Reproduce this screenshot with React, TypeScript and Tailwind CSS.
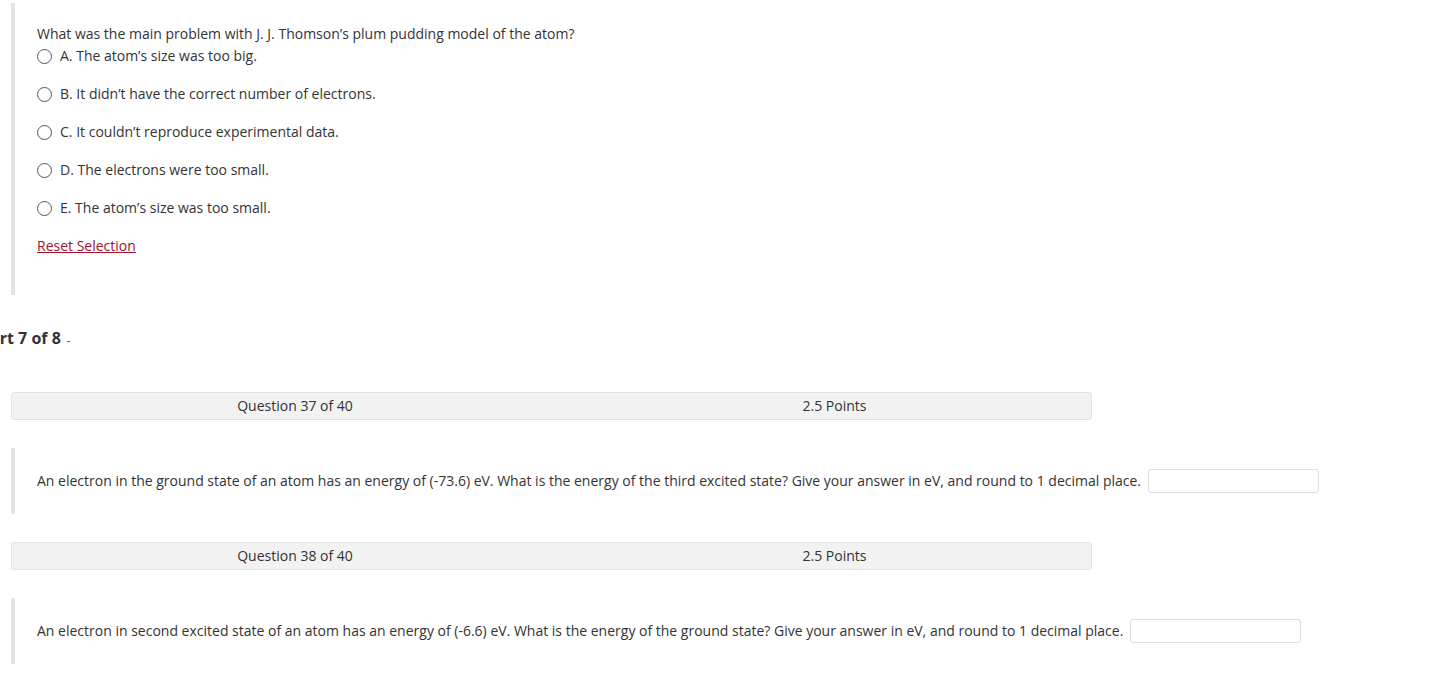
const OPTIONS = [
  "A. The atom’s size was too big.",
  "B. It didn’t have the correct number of electrons.",
  "C. It couldn’t reproduce experimental data.",
  "D. The electrons were too small.",
  "E. The atom’s size was too small.",
];

function Radio({ label }: { label: string }) {
  return (
    <label className="flex h-[18px] items-center gap-[8px]">
      <span className="h-[15px] w-[15px] shrink-0 rounded-full border border-[#555] bg-white" />
      <span>{label}</span>
    </label>
  );
}

function QuestionHeader({ num }: { num: number }) {
  return (
    <div className="ml-[11px] grid h-[28px] w-[1081px] grid-cols-[566px_1fr] items-center rounded-[3px] border border-[#e2e2e2] bg-[#f2f2f2]">
      <div className="text-center">Question {num} of 40</div>
      <div className="text-center">2.5 Points</div>
    </div>
  );
}

function FillIn({ text }: { text: string }) {
  return (
    <div className="ml-[11px] flex h-[66px] items-center border-l-4 border-[#e3e3e3] pl-[22px]">
      <span>{text}</span>
      <input
        type="text"
        className="ml-[7px] h-[24px] w-[171px] rounded-[3px] border border-[#dedede] bg-white outline-none"
      />
    </div>
  );
}

export default function App() {
  return (
    <div
      className="min-h-[682px] overflow-hidden bg-white text-[14px] leading-[18px] text-[#333]"
      style={{ fontFamily: '"Open Sans", Arial, sans-serif' }}
    >
      <div className="ml-[11px] mt-[3px] h-[292px] border-l-4 border-[#e3e3e3] pl-[22px] pt-[22px]">
        <p>What was the main problem with J. J. Thomson’s plum pudding model of the atom?</p>
        <div className="mt-[4px] flex flex-col gap-[20px]">
          {OPTIONS.map((o) => (
            <Radio key={o} label={o} />
          ))}
        </div>
        <a href="#" className="mt-[20px] inline-block text-[#a1112b] underline">
          Reset Selection
        </a>
      </div>

      <h2 className="-ml-[20px] mt-[32px] text-[16px] font-bold leading-[22px]">
        Part 7 of 8<span className="ml-[6px] text-[11px] font-normal">-</span>
      </h2>

      <div className="mt-[41px]">
        <QuestionHeader num={37} />
      </div>
      <div className="mt-[28px]">
        <FillIn text="An electron in the ground state of an atom has an energy of (-73.6) eV. What is the energy of the third excited state? Give your answer in eV, and round to 1 decimal place." />
      </div>
      <div className="mt-[28px]">
        <QuestionHeader num={38} />
      </div>
      <div className="mt-[28px]">
        <FillIn text="An electron in second excited state of an atom has an energy of (-6.6) eV. What is the energy of the ground state? Give your answer in eV, and round to 1 decimal place." />
      </div>
    </div>
  );
}
